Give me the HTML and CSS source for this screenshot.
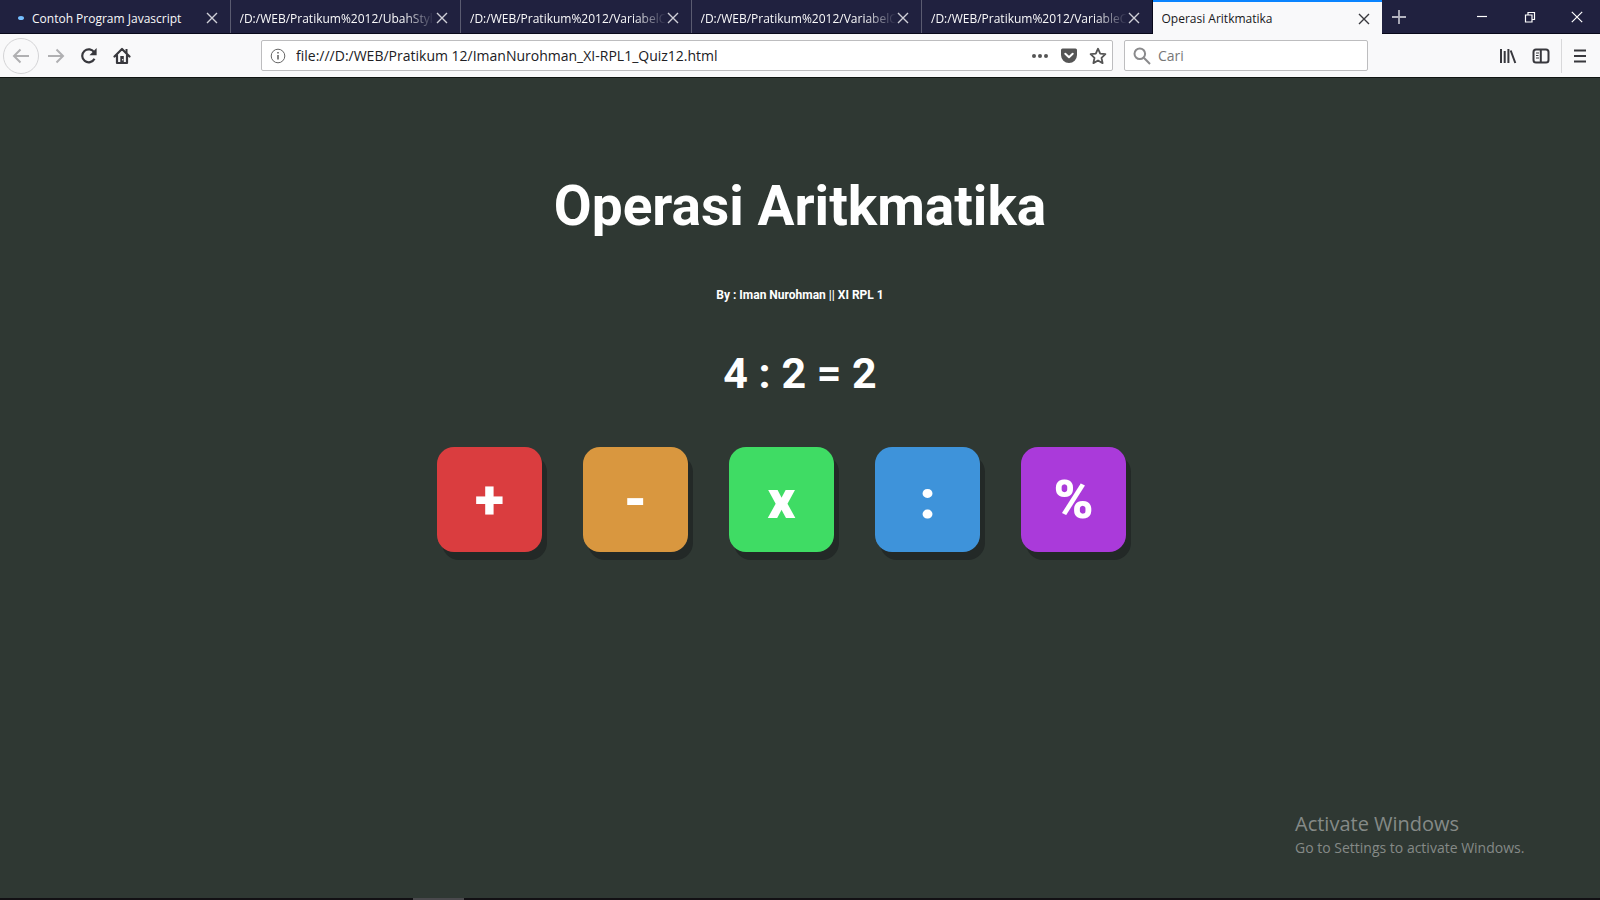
FILE: index.html
```html
<!DOCTYPE html>
<html lang="id">
<head>
<meta charset="utf-8">
<title>Operasi Aritkmatika</title>
<link rel="stylesheet" href="styles.css">
</head>
<body>
<header class="tabbar">
  <nav class="tabs" aria-label="Tabs">
    <div class="tab"><span class="loading"></span><a class="tab-title" href="#">Contoh Program Javascript</a><button class="tab-close" aria-label="Close tab"><svg viewBox="0 0 12 12"><path d="M1 1l10 10M11 1L1 11"/></svg></button></div>
    <div class="tab"><a class="tab-title fade" href="#">/D:/WEB/Pratikum%2012/UbahStyl</a><button class="tab-close" aria-label="Close tab"><svg viewBox="0 0 12 12"><path d="M1 1l10 10M11 1L1 11"/></svg></button></div>
    <div class="tab"><a class="tab-title fade" href="#">/D:/WEB/Pratikum%2012/VariabelC</a><button class="tab-close" aria-label="Close tab"><svg viewBox="0 0 12 12"><path d="M1 1l10 10M11 1L1 11"/></svg></button></div>
    <div class="tab"><a class="tab-title fade" href="#">/D:/WEB/Pratikum%2012/VariabelC</a><button class="tab-close" aria-label="Close tab"><svg viewBox="0 0 12 12"><path d="M1 1l10 10M11 1L1 11"/></svg></button></div>
    <div class="tab"><a class="tab-title fade" href="#">/D:/WEB/Pratikum%2012/VariableC</a><button class="tab-close" aria-label="Close tab"><svg viewBox="0 0 12 12"><path d="M1 1l10 10M11 1L1 11"/></svg></button></div>
    <div class="tab active"><a class="tab-title" href="#">Operasi Aritkmatika</a><button class="tab-close" aria-label="Close tab"><svg viewBox="0 0 12 12"><path d="M1 1l10 10M11 1L1 11"/></svg></button></div>
  </nav>
  <button class="new-tab" aria-label="New tab"><svg viewBox="0 0 16 16"><path d="M8 1v14M1 8h14"/></svg></button>
  <div class="window-controls">
    <button aria-label="Minimize"><svg viewBox="0 0 12 12"><path d="M1 5.5h10"/></svg></button>
    <button aria-label="Restore"><svg viewBox="0 0 12 12"><path d="M1.500 4h6.500v7h-6.500zM4 3.500v-2h6.500v7h-2"/></svg></button>
    <button aria-label="Close"><svg viewBox="0 0 12 12"><path d="M.8.800l10.400 10.400M11.200.800L.8 11.200"/></svg></button>
  </div>
</header>
<div class="toolbar">
  <div class="nav-buttons">
    <button class="back" aria-label="Back"><svg viewBox="0 0 18 18"><path d="M17 9H2M8.500 2.500L2 9l6.500 6.500"/></svg></button>
    <button class="forward" aria-label="Forward"><svg viewBox="0 0 18 18"><path d="M1 9h15M9.500 2.500L16 9l-6.500 6.500"/></svg></button>
    <button aria-label="Reload"><svg viewBox="0 0 18 18"><path d="M14.500 11.800A6.500 6.500 0 1 1 14.300 5.500" stroke-width="2.200"/><path d="M16.600 1v7.300H9.500z" fill="#38383d" stroke="none"/></svg></button>
    <button aria-label="Home"><svg viewBox="0 0 18 18"><path d="M1.500 9.500L9 2l7.500 7.500M4 8.500V16h10V8.500" stroke-width="2.200" stroke-linejoin="round" stroke-linecap="round"/><path d="M12.500 2h2v4h-2zM7.300 9h3.500v7H7.300z" fill="#38383d" stroke="none"/><circle cx="9.700" cy="12.700" r=".7" fill="#fff" stroke="none"/></svg></button>
  </div>
  <div class="field address">
    <svg class="info" viewBox="0 0 16 16"><circle cx="8" cy="8" r="6.800"/><path d="M8 7v4.500M8 4v1.600" stroke-width="1.600"/></svg>
    <input type="text" aria-label="Address" value="file:///D:/WEB/Pratikum 12/ImanNurohman_XI-RPL1_Quiz12.html">
    <button aria-label="Page actions"><svg viewBox="0 0 18 18"><g fill="#555" stroke="none"><circle cx="3" cy="9" r="2"/><circle cx="9" cy="9" r="2"/><circle cx="15" cy="9" r="2"/></g></svg></button>
    <button aria-label="Save to Pocket"><svg viewBox="0 0 18 18"><path d="M2.500 1.500h13a1.500 1.500 0 0 1 1.500 1.500v5a8 8 0 0 1-16 0V3a1.500 1.500 0 0 1 1.500-1.500z" fill="#555" stroke="none"/><path d="M5.300 6.700L9 10.300l3.700-3.600" stroke="#fff" stroke-width="2" stroke-linecap="round" stroke-linejoin="round"/></svg></button>
    <button aria-label="Bookmark"><svg viewBox="0 0 18 18"><path d="M9 1.700l2.200 4.900 5.200.6-3.900 3.600 1.100 5.300L9 13.500l-4.600 2.600 1.100-5.300-3.900-3.600 5.200-.6z" stroke="#555" stroke-width="1.800" stroke-linejoin="round"/></svg></button>
  </div>
  <div class="field search">
    <svg class="glass" viewBox="0 0 18 18"><circle cx="6.800" cy="6.800" r="5.300"/><path d="M10.800 10.800L17 17"/></svg>
    <input type="text" aria-label="Search" placeholder="Cari">
  </div>
  <div class="tools">
    <button aria-label="Library"><svg viewBox="0 0 18 18"><path d="M2 2v14M5.700 4v12M9.400 2v14M11.700 3.500L16.300 16"/></svg></button>
    <button aria-label="Sidebars"><svg viewBox="0 0 18 18"><rect x="1.500" y="2.500" width="15" height="13" rx="2.500"/><path d="M8.800 3v12"/><path d="M4 6h3M4 8.500h2.500M4 11h3" stroke-width="1"/></svg></button>
    <button class="menu" aria-label="Menu"><svg viewBox="0 0 18 18"><path d="M3 3.500h12M3 9h12M3 14.500h12"/></svg></button>
  </div>
</div>
<main class="page">
  <h1>Operasi Aritkmatika</h1>
  <p class="author">By : Iman Nurohman || XI RPL 1</p>
  <output class="result">4 : 2 = 2</output>
  <div class="operators">
    <button class="op plus">+</button>
    <button class="op minus">-</button>
    <button class="op times">x</button>
    <button class="op divide">:</button>
    <button class="op modulo">%</button>
  </div>
  <aside class="activation">
    <p class="activation-title">Activate Windows</p>
    <p class="activation-text">Go to Settings to activate Windows.</p>
  </aside>
</main>
<footer class="taskbar"><div class="taskbar-item"></div></footer>
</body>
</html>
```
FILE: styles.css
```css
* { box-sizing: border-box; }
body {
  margin: 0;
  min-height: 100vh;
  display: flex;
  flex-direction: column;
  background: #2f3833;
  color: #fff;
  font-family: "Open Sans", "Noto Sans", sans-serif;
}
button {
  border: 0;
  padding: 0;
  background: none;
  color: inherit;
  font: inherit;
  display: flex;
  align-items: center;
  justify-content: center;
  flex: none;
}
svg { display: block; fill: none; stroke: currentColor; }
p, h1 { margin: 0; }

.tabbar {
  display: flex;
  height: 34px;
  background: #20213f;
  border-bottom: 1px solid #08081a;
}
.tabs { display: flex; flex: 1; min-width: 0; }
.tab {
  flex: 1 1 0;
  min-width: 0;
  height: 33px;
  display: flex;
  align-items: center;
  padding: 3px 12px 0 9px;
  border-right: 1px solid #5a5b70;
  color: #f9f9fa;
  font-size: 12px;
}
.tab:nth-child(5) { border-right-color: #08081a; }
.tab-title {
  flex: 1;
  min-width: 0;
  overflow: hidden;
  white-space: nowrap;
  color: inherit;
  text-decoration: none;
}
.fade {
  -webkit-mask-image: linear-gradient(to left, transparent, #000 32px);
  mask-image: linear-gradient(to left, transparent, #000 32px);
}
.tab-close { width: 12px; height: 12px; margin-left: 1px; color: #d0d0d8; }
.tab-close svg { width: 12px; height: 12px; stroke-width: 1.4; }
.loading { width: 6px; height: 4px; margin: 0 8px 0 9px; border-radius: 50%; background: #75bfff; flex: none; }
.tab.active {
  height: 34px;
  padding-top: 1px;
  padding-bottom: 0;
  background: #f9f9fa;
  border-top: 2px solid #0a84ff;
  border-right: 0;
  color: #18181a;
}
.active .tab-close { color: #38383d; }
.new-tab { width: 34px; color: #b4b4c0; }
.new-tab svg { width: 16px; height: 16px; stroke-width: 1.8; }
.window-controls { display: flex; margin-left: 41px; }
.window-controls button { width: 47px; }
.window-controls button:first-child { width: 49px; }
.window-controls svg { width: 12px; height: 12px; stroke-width: 1.2; }

.toolbar {
  display: flex;
  align-items: center;
  height: 44px;
  padding: 0 2px 0 3px;
  background: #f9f9fa;
  border-bottom: 1px solid #101512;
  color: #38383d;
}
.nav-buttons { display: flex; align-items: center; flex: 0 1 258px; }
.nav-buttons button { width: 33px; height: 36px; }
.toolbar button svg { width: 18px; height: 18px; stroke-width: 2; }
.nav-buttons .back { width: 36px; border: 1px solid #d4d4d6; border-radius: 50%; color: #b0b0b2; }
.nav-buttons .forward { color: #b0b0b2; }
.field {
  height: 31px;
  display: flex;
  align-items: center;
  background: #fff;
  border: 1px solid #bdbdbf;
  border-radius: 2px;
}
.field input {
  flex: 1;
  min-width: 0;
  border: 0;
  padding: 0;
  outline: 0;
  background: none;
  color: #202024;
  font: 14px "Open Sans", "Noto Sans", sans-serif;
}
.field input::placeholder { color: #777; opacity: 1; }
.address { flex: 1; min-width: 0; padding: 0 5px 0 8px; }
.address button { width: 18px; height: 28px; margin-left: 11px; }
.info { width: 16px; height: 16px; margin-right: 10px; color: #666; }
.search { flex: 0 1 244px; min-width: 0; margin-left: 11px; padding-left: 8px; }
.glass { width: 18px; height: 18px; margin-right: 7px; color: #8a8a8c; stroke-width: 2; }
.tools { display: flex; align-items: center; justify-content: flex-end; flex: 0 0 230px; }
.tools button { width: 33px; height: 34px; }
.tools .menu { width: 37px; margin-left: 4px; border-left: 1px solid #d8d8da; }

.page {
  position: relative;
  flex: 1;
  display: flex;
  flex-direction: column;
  align-items: center;
  padding-top: 90px;
  font-family: Roboto, "Noto Sans", sans-serif;
  font-weight: 700;
}
h1 { font: 700 55px/76px Roboto, "Noto Sans", sans-serif; }
.author { margin-top: 42px; font-size: 12px; line-height: 18px; }
.result { margin-top: 41px; font-size: 43px; line-height: 56px; }
.operators { display: flex; gap: 41px; margin-top: 46px; padding-right: 37px; }
.op {
  width: 105px;
  height: 105px;
  border-radius: 17px;
  box-shadow: 5px 8px 0 #232927;
  font-size: 54px;
  font-weight: 900;
}
.plus { background: #da3d3f; }
.minus { background: #d9973f; }
.times { background: #3fdc64; }
.divide { background: #3e93da; }
.modulo { background: #aa3ada; }
.activation {
  position: absolute;
  right: 69px;
  bottom: 40px;
  width: 236px;
  color: #858a87;
  font-family: "Open Sans", "Noto Sans", sans-serif;
  font-weight: 400;
  white-space: nowrap;
}
.activation-title { font-size: 20px; line-height: 28px; }
.activation-text { font-size: 14px; line-height: 20px; }
.taskbar { height: 2px; padding-left: 413px; background: #121014; }
.taskbar-item { width: 51px; height: 2px; background: #4a494d; }
```
